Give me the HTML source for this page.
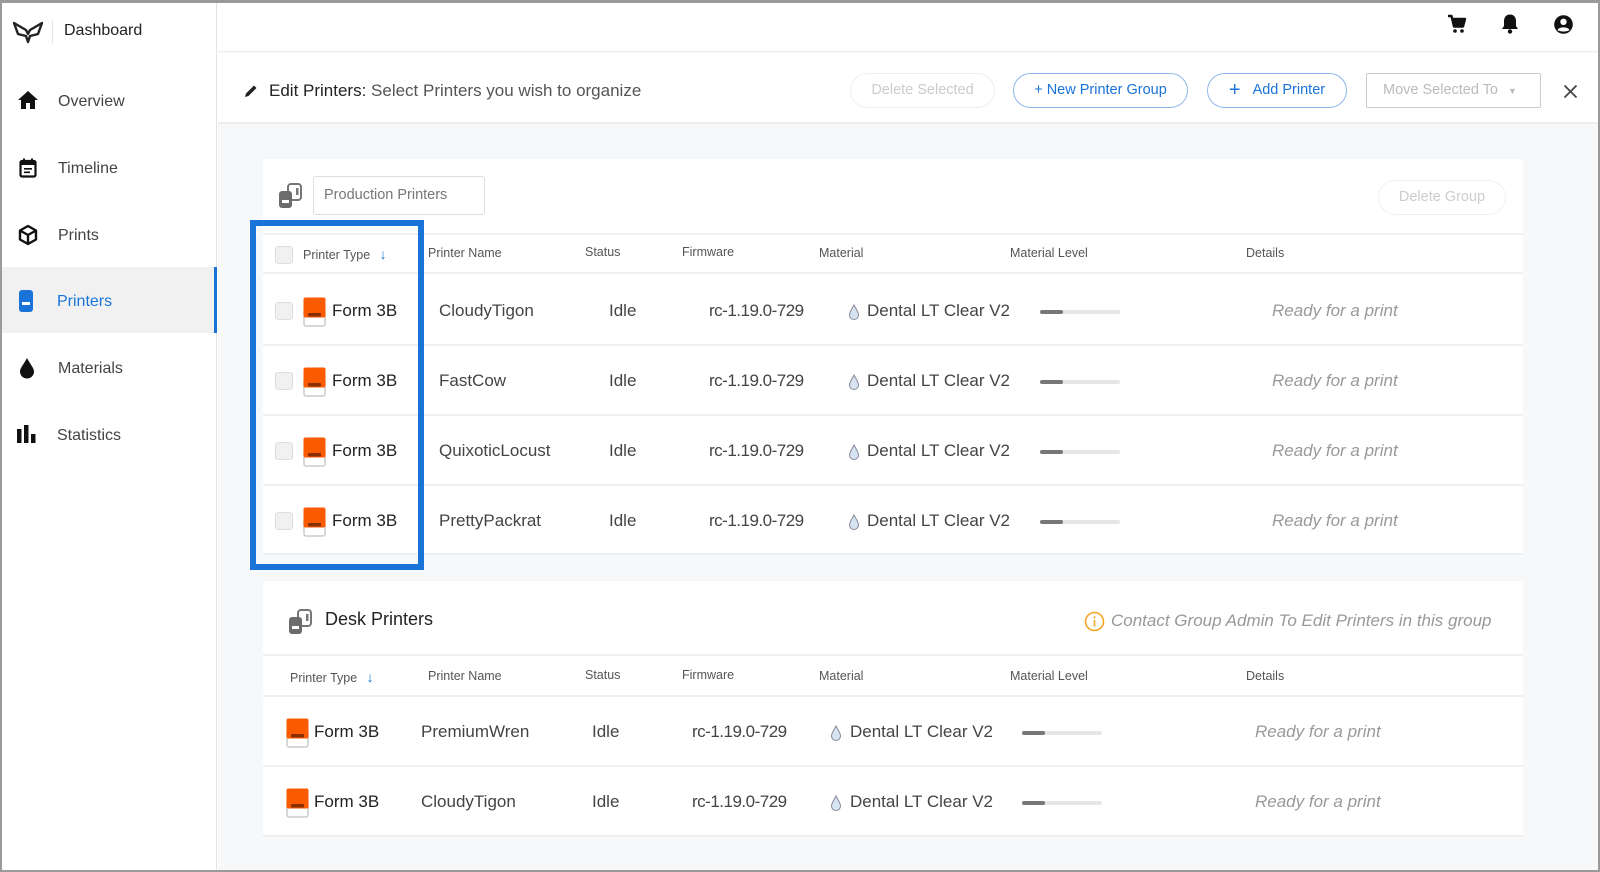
<!DOCTYPE html>
<html><head><meta charset="utf-8"><style>
*{box-sizing:border-box;margin:0;padding:0}
body{width:1600px;height:872px;overflow:hidden;font-family:"Liberation Sans",sans-serif;background:#fff;position:relative;color:#333}
.a{position:absolute;white-space:nowrap}
.frame{position:absolute;left:0;top:0;width:1600px;height:872px;border:2px solid #9a9a9a;border-top-width:3px;pointer-events:none;z-index:10}
.side{left:0;top:0;width:217px;height:872px;border-right:1px solid #e3e3e3;background:#fff}
.nav{font-size:16px;color:#444}
.main{left:218px;top:52px;width:1382px;height:820px;background:#f7f8fa}
.card{background:#fff}
.hd{font-size:12.5px;color:#555}
.td{font-size:17px;color:#444}
.fw{letter-spacing:-0.5px}
.btn{border-radius:18px;font-size:14.5px;text-align:center;line-height:32px;height:35px}
.cb{width:18px;height:18px;border:1px solid #ddd;border-radius:3px;background:#f1f1f1}
.line{height:2px;background:#eef0f2}
.bar{width:80px;height:4px;background:#e6e6e6;border-radius:2px}
.bar i{display:block;width:23px;height:4px;background:#777;border-radius:2px}
.rdy{font-size:17px;color:#999;font-style:italic}
</style></head><body>
<div class="frame"></div>
<div class="a side"></div>
<svg class="a" style="left:12px;top:20px" width="32" height="24" viewBox="0 0 32 24"><path d="M2 3 L14 10 L16 14 L18 10 L30 3 L26 14 L18 16 L16 22 L14 16 L6 14 Z" fill="none" stroke="#222" stroke-width="2.4" stroke-linejoin="round"/></svg>
<div class="a" style="left:52px;top:20px;width:1px;height:24px;background:#e5e5e5"></div>
<div class="a" style="left:64px;top:22px;font-size:16px;color:#222">Dashboard</div>

<svg class="a" style="left:17px;top:90px" width="22" height="20" viewBox="0 0 22 20"><path d="M11 1 L21 10 H18 V19 H13 V13 H9 V19 H4 V10 H1 Z" fill="#111"/></svg>
<div class="a nav" style="left:58px;top:93px">Overview</div>
<svg class="a" style="left:19px;top:158px" width="18" height="20" viewBox="0 0 18 20"><rect x="1.5" y="3" width="15" height="15.5" rx="1.5" fill="none" stroke="#111" stroke-width="2.2"/><rect x="1.5" y="3" width="15" height="4" fill="#111"/><rect x="4" y="0.5" width="2" height="4" fill="#111"/><rect x="12" y="0.5" width="2" height="4" fill="#111"/><rect x="5" y="10" width="8" height="1.6" fill="#111"/><rect x="5" y="13.5" width="6" height="1.6" fill="#111"/></svg>
<div class="a nav" style="left:58px;top:160px">Timeline</div>
<svg class="a" style="left:17px;top:224px" width="22" height="22" viewBox="0 0 22 22"><path d="M11 2 L19 6.5 V15.5 L11 20 L3 15.5 V6.5 Z M3 6.5 L11 11 L19 6.5 M11 11 V20" fill="none" stroke="#111" stroke-width="2.4" stroke-linejoin="round"/></svg>
<div class="a nav" style="left:58px;top:227px">Prints</div>
<div class="a" style="left:0;top:267px;width:217px;height:66px;background:#f1f1f1;border-right:3px solid #1a73d9"></div>
<svg class="a" style="left:18px;top:289px" width="16" height="24" viewBox="0 0 16 24"><rect x="1" y="1" width="14" height="22" rx="3" fill="#1a73d9"/><rect x="4" y="13" width="8" height="3" fill="#fff"/></svg>
<div class="a nav" style="left:57px;top:293px;color:#1a73d9">Printers</div>
<svg class="a" style="left:19px;top:357px" width="16" height="22" viewBox="0 0 16 22"><path d="M8 1 C5 7 1 11 1 14.5 A7 7 0 0 0 15 14.5 C15 11 11 7 8 1Z" fill="#111"/></svg>
<div class="a nav" style="left:58px;top:360px">Materials</div>
<svg class="a" style="left:16px;top:424px" width="22" height="20" viewBox="0 0 22 20"><rect x="1" y="5" width="4.5" height="14" fill="#111"/><rect x="8" y="1" width="4.5" height="18" fill="#111"/><rect x="15" y="10" width="4.5" height="9" fill="#111"/></svg>
<div class="a nav" style="left:57px;top:427px">Statistics</div>

<div class="a" style="left:218px;top:51px;width:1382px;height:2px;background:#eceef0"></div>
<svg class="a" style="left:1447px;top:14px" width="20" height="20" viewBox="0 0 20 20"><path d="M1 2 H4.5 L7 12.5 H16 L18 5 H5.5" fill="none" stroke="#111" stroke-width="2.4" stroke-linejoin="round"/><path d="M6 5 H18 L16 12.5 H7.5Z" fill="#111"/><circle cx="8" cy="17" r="1.8" fill="#111"/><circle cx="15" cy="17" r="1.8" fill="#111"/></svg>
<svg class="a" style="left:1500px;top:13px" width="20" height="22" viewBox="0 0 20 22"><path d="M10 1.5 C6 1.5 4 4.5 4 8 V13 L2 16 H18 L16 13 V8 C16 4.5 14 1.5 10 1.5Z" fill="#111"/><circle cx="10" cy="18.5" r="2.2" fill="#111"/></svg>
<svg class="a" style="left:1553px;top:14px" width="21" height="21" viewBox="0 0 21 21"><circle cx="10.5" cy="10.5" r="9.3" fill="#111"/><circle cx="10.5" cy="7.8" r="3.2" fill="#fff"/><path d="M4.5 16 C6 12.5 15 12.5 16.5 16 C14.5 18 6.5 18 4.5 16Z" fill="#fff"/></svg>

<div class="a main"></div>
<div class="a" style="left:218px;top:53px;width:1382px;height:71px;background:#fff;border-bottom:2px solid #eceef0"></div>
<svg class="a" style="left:243px;top:83px" width="16" height="16" viewBox="0 0 16 16"><path d="M2 14 L3 10.5 L11 2.5 L13.5 5 L5.5 13Z" fill="#222"/></svg>
<div class="a" style="left:269px;top:81px;font-size:17px;color:#555"><span style="color:#222">Edit Printers:</span> Select Printers you wish to organize</div>
<div class="a btn" style="left:850px;top:73px;width:145px;border:1.5px solid #eee;color:#ccc">Delete Selected</div>
<div class="a btn" style="left:1013px;top:73px;width:175px;border:1.5px solid #8fb8ea;color:#1a73d9">+ New Printer Group</div>
<div class="a btn" style="left:1207px;top:73px;width:140px;border:1.5px solid #8fb8ea;color:#1a73d9"><span style="font-size:20px;vertical-align:-2px;margin-right:12px">+</span>Add Printer</div>
<div class="a" style="left:1366px;top:73px;width:175px;height:35px;border:1.5px solid #ccc;border-radius:2px;font-size:14.5px;color:#bbb;line-height:32px;padding-left:16px">Move Selected To <span style="font-size:9px;margin-left:6px">▼</span></div>
<svg class="a" style="left:1563px;top:84px" width="15" height="15" viewBox="0 0 15 15"><path d="M1.5 1.5 L13.5 13.5 M13.5 1.5 L1.5 13.5" stroke="#444" stroke-width="1.8"/></svg>

<div class="a card" style="left:263px;top:159px;width:1260px;height:396px"></div>
<svg class="a" style="left:278px;top:183px" width="25" height="26" viewBox="0 0 25 26"><rect x="10" y="1" width="13" height="16" rx="3" fill="#fff" stroke="#777" stroke-width="2"/><rect x="18" y="5" width="2.5" height="7" fill="#777"/><rect x="1" y="8" width="13" height="17" rx="3" fill="#6c6c6c"/><rect x="4" y="17" width="7" height="3" fill="#fff"/></svg>
<div class="a" style="left:313px;top:176px;width:172px;height:39px;border:1.5px solid #ddd;border-radius:3px;font-size:14.5px;color:#777;line-height:36px;padding-left:10px">Production Printers</div>
<div class="a btn" style="left:1378px;top:180px;width:128px;border:1.5px solid #f0f0f0;color:#ccc">Delete Group</div>
<div class="a line" style="left:263px;top:233px;width:1260px"></div>
<div class="a line" style="left:263px;top:272px;width:1260px"></div>
<div class="a cb" style="left:275px;top:246px"></div>
<div class="a hd" style="left:303px;top:246px">Printer Type <span style="color:#1a73d9;margin-left:6px;font-size:14px">↓</span></div>
<div class="a hd" style="left:428px;top:246px">Printer Name</div>
<div class="a hd" style="left:585px;top:245px">Status</div>
<div class="a hd" style="left:682px;top:245px">Firmware</div>
<div class="a hd" style="left:819px;top:246px">Material</div>
<div class="a hd" style="left:1010px;top:246px">Material Level</div>
<div class="a hd" style="left:1246px;top:246px">Details</div>

<div class="a" style="left:263px;top:344px;width:1260px;height:2px;background:#eef0f2"></div>
<div class="a" style="left:263px;top:414px;width:1260px;height:2px;background:#eef0f2"></div>
<div class="a" style="left:263px;top:484px;width:1260px;height:2px;background:#eef0f2"></div>
<div class="a" style="left:263px;top:553px;width:1260px;height:2px;background:#eef0f2"></div>

<div class="a" style="left:0;top:300px;width:1600px;height:24px">
 <div class="a cb" style="left:275px;top:2px"></div>
 <svg class="a" style="left:303px;top:-3px" width="23" height="30" viewBox="0 0 23 30"><rect x="1" y="12" width="21" height="17" rx="2" fill="#fff" stroke="#ccc" stroke-width="1.5"/><rect x="0.5" y="0.5" width="22" height="20" rx="2" fill="#fa5a00"/><rect x="5" y="16" width="13" height="3.5" rx="1" fill="#8a2e00"/></svg>
 <div class="a td" style="left:332px;top:1px;color:#222">Form 3B</div>
 <div class="a td" style="left:439px;top:1px">CloudyTigon</div>
 <div class="a td" style="left:609px;top:1px">Idle</div>
 <div class="a td fw" style="left:709px;top:1px">rc-1.19.0-729</div>
 <svg class="a" style="left:848px;top:4px" width="12" height="17" viewBox="0 0 12 17"><path d="M6 1 C4 5 1.5 8 1.5 11 A4.5 4.5 0 0 0 10.5 11 C10.5 8 8 5 6 1Z" fill="#d6e3f0" stroke="#889" stroke-width="1"/></svg>
 <div class="a td" style="left:867px;top:1px">Dental LT Clear V2</div>
 <div class="a bar" style="left:1040px;top:10px"><i></i></div>
 <div class="a rdy" style="left:1272px;top:1px">Ready for a print</div>
</div>
<div class="a" style="left:0;top:370px;width:1600px;height:24px">
 <div class="a cb" style="left:275px;top:2px"></div>
 <svg class="a" style="left:303px;top:-3px" width="23" height="30" viewBox="0 0 23 30"><rect x="1" y="12" width="21" height="17" rx="2" fill="#fff" stroke="#ccc" stroke-width="1.5"/><rect x="0.5" y="0.5" width="22" height="20" rx="2" fill="#fa5a00"/><rect x="5" y="16" width="13" height="3.5" rx="1" fill="#8a2e00"/></svg>
 <div class="a td" style="left:332px;top:1px;color:#222">Form 3B</div>
 <div class="a td" style="left:439px;top:1px">FastCow</div>
 <div class="a td" style="left:609px;top:1px">Idle</div>
 <div class="a td fw" style="left:709px;top:1px">rc-1.19.0-729</div>
 <svg class="a" style="left:848px;top:4px" width="12" height="17" viewBox="0 0 12 17"><path d="M6 1 C4 5 1.5 8 1.5 11 A4.5 4.5 0 0 0 10.5 11 C10.5 8 8 5 6 1Z" fill="#d6e3f0" stroke="#889" stroke-width="1"/></svg>
 <div class="a td" style="left:867px;top:1px">Dental LT Clear V2</div>
 <div class="a bar" style="left:1040px;top:10px"><i></i></div>
 <div class="a rdy" style="left:1272px;top:1px">Ready for a print</div>
</div>
<div class="a" style="left:0;top:440px;width:1600px;height:24px">
 <div class="a cb" style="left:275px;top:2px"></div>
 <svg class="a" style="left:303px;top:-3px" width="23" height="30" viewBox="0 0 23 30"><rect x="1" y="12" width="21" height="17" rx="2" fill="#fff" stroke="#ccc" stroke-width="1.5"/><rect x="0.5" y="0.5" width="22" height="20" rx="2" fill="#fa5a00"/><rect x="5" y="16" width="13" height="3.5" rx="1" fill="#8a2e00"/></svg>
 <div class="a td" style="left:332px;top:1px;color:#222">Form 3B</div>
 <div class="a td" style="left:439px;top:1px">QuixoticLocust</div>
 <div class="a td" style="left:609px;top:1px">Idle</div>
 <div class="a td fw" style="left:709px;top:1px">rc-1.19.0-729</div>
 <svg class="a" style="left:848px;top:4px" width="12" height="17" viewBox="0 0 12 17"><path d="M6 1 C4 5 1.5 8 1.5 11 A4.5 4.5 0 0 0 10.5 11 C10.5 8 8 5 6 1Z" fill="#d6e3f0" stroke="#889" stroke-width="1"/></svg>
 <div class="a td" style="left:867px;top:1px">Dental LT Clear V2</div>
 <div class="a bar" style="left:1040px;top:10px"><i></i></div>
 <div class="a rdy" style="left:1272px;top:1px">Ready for a print</div>
</div>
<div class="a" style="left:0;top:510px;width:1600px;height:24px">
 <div class="a cb" style="left:275px;top:2px"></div>
 <svg class="a" style="left:303px;top:-3px" width="23" height="30" viewBox="0 0 23 30"><rect x="1" y="12" width="21" height="17" rx="2" fill="#fff" stroke="#ccc" stroke-width="1.5"/><rect x="0.5" y="0.5" width="22" height="20" rx="2" fill="#fa5a00"/><rect x="5" y="16" width="13" height="3.5" rx="1" fill="#8a2e00"/></svg>
 <div class="a td" style="left:332px;top:1px;color:#222">Form 3B</div>
 <div class="a td" style="left:439px;top:1px">PrettyPackrat</div>
 <div class="a td" style="left:609px;top:1px">Idle</div>
 <div class="a td fw" style="left:709px;top:1px">rc-1.19.0-729</div>
 <svg class="a" style="left:848px;top:4px" width="12" height="17" viewBox="0 0 12 17"><path d="M6 1 C4 5 1.5 8 1.5 11 A4.5 4.5 0 0 0 10.5 11 C10.5 8 8 5 6 1Z" fill="#d6e3f0" stroke="#889" stroke-width="1"/></svg>
 <div class="a td" style="left:867px;top:1px">Dental LT Clear V2</div>
 <div class="a bar" style="left:1040px;top:10px"><i></i></div>
 <div class="a rdy" style="left:1272px;top:1px">Ready for a print</div>
</div>

<div class="a" style="left:250px;top:220px;width:174px;height:350px;border:6px solid #1a73d9"></div>

<div class="a card" style="left:263px;top:581px;width:1260px;height:256px"></div>
<svg class="a" style="left:288px;top:609px" width="25" height="26" viewBox="0 0 25 26"><rect x="10" y="1" width="13" height="16" rx="3" fill="#fff" stroke="#777" stroke-width="2"/><rect x="18" y="5" width="2.5" height="7" fill="#777"/><rect x="1" y="8" width="13" height="17" rx="3" fill="#6c6c6c"/><rect x="4" y="17" width="7" height="3" fill="#fff"/></svg>
<div class="a" style="left:325px;top:609px;font-size:18px;color:#222">Desk Printers</div>
<svg class="a" style="left:1084px;top:611px" width="21" height="21" viewBox="0 0 21 21"><circle cx="10.5" cy="10.5" r="9" fill="none" stroke="#f5a623" stroke-width="1.6"/><rect x="9.7" y="9" width="1.6" height="6.5" fill="#f5a623"/><circle cx="10.5" cy="6.3" r="1.1" fill="#f5a623"/></svg>
<div class="a" style="left:1111px;top:611px;font-size:17px;color:#999;font-style:italic">Contact Group Admin To Edit Printers in this group</div>
<div class="a line" style="left:263px;top:654px;width:1260px"></div>
<div class="a line" style="left:263px;top:695px;width:1260px"></div>
<div class="a hd" style="left:290px;top:669px">Printer Type <span style="color:#1a73d9;margin-left:6px;font-size:14px">↓</span></div>
<div class="a hd" style="left:428px;top:669px">Printer Name</div>
<div class="a hd" style="left:585px;top:668px">Status</div>
<div class="a hd" style="left:682px;top:668px">Firmware</div>
<div class="a hd" style="left:819px;top:669px">Material</div>
<div class="a hd" style="left:1010px;top:669px">Material Level</div>
<div class="a hd" style="left:1246px;top:669px">Details</div>
<div class="a line" style="left:263px;top:765px;width:1260px"></div>
<div class="a line" style="left:263px;top:835px;width:1260px"></div>

<div class="a" style="left:0;top:721px;width:1600px;height:24px">
 <svg class="a" style="left:286px;top:-3px" width="23" height="30" viewBox="0 0 23 30"><rect x="1" y="12" width="21" height="17" rx="2" fill="#fff" stroke="#ccc" stroke-width="1.5"/><rect x="0.5" y="0.5" width="22" height="20" rx="2" fill="#fa5a00"/><rect x="5" y="16" width="13" height="3.5" rx="1" fill="#8a2e00"/></svg>
 <div class="a td" style="left:314px;top:1px;color:#222">Form 3B</div>
 <div class="a td" style="left:421px;top:1px">PremiumWren</div>
 <div class="a td" style="left:592px;top:1px">Idle</div>
 <div class="a td fw" style="left:692px;top:1px">rc-1.19.0-729</div>
 <svg class="a" style="left:830px;top:4px" width="12" height="17" viewBox="0 0 12 17"><path d="M6 1 C4 5 1.5 8 1.5 11 A4.5 4.5 0 0 0 10.5 11 C10.5 8 8 5 6 1Z" fill="#d6e3f0" stroke="#889" stroke-width="1"/></svg>
 <div class="a td" style="left:850px;top:1px">Dental LT Clear V2</div>
 <div class="a bar" style="left:1022px;top:10px"><i></i></div>
 <div class="a rdy" style="left:1255px;top:1px">Ready for a print</div>
</div>
<div class="a" style="left:0;top:791px;width:1600px;height:24px">
 <svg class="a" style="left:286px;top:-3px" width="23" height="30" viewBox="0 0 23 30"><rect x="1" y="12" width="21" height="17" rx="2" fill="#fff" stroke="#ccc" stroke-width="1.5"/><rect x="0.5" y="0.5" width="22" height="20" rx="2" fill="#fa5a00"/><rect x="5" y="16" width="13" height="3.5" rx="1" fill="#8a2e00"/></svg>
 <div class="a td" style="left:314px;top:1px;color:#222">Form 3B</div>
 <div class="a td" style="left:421px;top:1px">CloudyTigon</div>
 <div class="a td" style="left:592px;top:1px">Idle</div>
 <div class="a td fw" style="left:692px;top:1px">rc-1.19.0-729</div>
 <svg class="a" style="left:830px;top:4px" width="12" height="17" viewBox="0 0 12 17"><path d="M6 1 C4 5 1.5 8 1.5 11 A4.5 4.5 0 0 0 10.5 11 C10.5 8 8 5 6 1Z" fill="#d6e3f0" stroke="#889" stroke-width="1"/></svg>
 <div class="a td" style="left:850px;top:1px">Dental LT Clear V2</div>
 <div class="a bar" style="left:1022px;top:10px"><i></i></div>
 <div class="a rdy" style="left:1255px;top:1px">Ready for a print</div>
</div>
</body></html>
